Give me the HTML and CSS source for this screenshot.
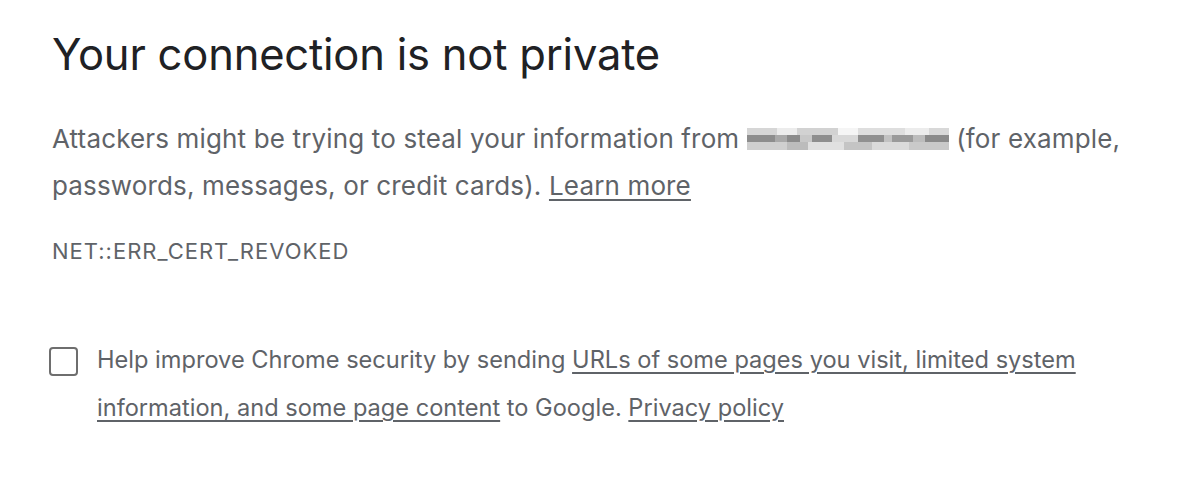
FILE: index.html
```html
<!DOCTYPE html>
<html lang="en">
<head>
    <meta charset="UTF-8">
    <title>Privacy error</title>
    <link rel="stylesheet" href="styles.css">
</head>
<body>
<div class="interstitial">
    <h1 class="main-title">Your connection is not private</h1>
    <p class="main-message">Attackers might be trying to steal your information from <span class="blur-host"><i class="px r1"></i><i class="px r2"></i><i class="px r3"></i></span> (for example,
        passwords, messages, or credit cards). <a href="#">Learn more</a></p>
    <div class="error-code">NET::ERR_CERT_REVOKED</div>
    <div class="extended-reporting">
        <span class="checkbox"></span>
        <p class="opt-in">Help improve Chrome security by sending <a href="#">URLs of some pages you visit, limited system information, and some page content</a> to Google. <a href="#">Privacy policy</a></p>
    </div>
</div>
</body>
</html>
```

FILE: styles.css
```css
html, body{
    margin: 0;
    padding: 0;
    background: #fff;
}
body{
    font-family: Inter, "Liberation Sans", Arial, sans-serif;
    color: #5f6368;
}
.interstitial{
    padding: 24px 0 0 52px;
    width: 1100px;
}
.main-title{
    margin: 0;
    font-size: 43.5px;
    font-weight: normal;
    letter-spacing: -0.2px;
    line-height: 60px;
    color: #202124;
}
.main-message{
    margin: 31px 0 0;
    font-size: 26px;
    letter-spacing: 0.15px;
    line-height: 47px;
}
a{
    color: #5f6368;
    text-decoration: underline;
    text-underline-offset: 4px;
    text-decoration-thickness: 1.5px;
}
.blur-host{
    display: inline-block;
    vertical-align: -2px;
    width: 202px;
    height: 22px;
}
.px{
    display: block;
    height: 7px;
}
.r1{
    background: linear-gradient(90deg, #d6d6d6 0 15%, #ececec 15% 25%, #d2d2d2 25% 45%, #f5f5f5 45% 55%, #dedede 55% 78%, #ececec 78% 90%, #d8d8d8 90%);
}
.r2{
    background: linear-gradient(90deg, #8d8d8d 0 14%, #a9a9a9 14% 20%, #8b8b8b 20% 26%, #c8c8c8 26% 32%, #8e8e8e 32% 42%, #d8d8d8 42% 55%, #909090 55% 68%, #c2c2c2 68% 72%, #9a9a9a 72% 82%, #bcbcbc 82% 88%, #8a8a8a 88%);
}
.r3{
    background: linear-gradient(90deg, #cfcfcf 0 20%, #bcbcbc 20% 30%, #e0e0e0 30% 48%, #c4c4c4 48% 62%, #dadada 62% 80%, #c9c9c9 80%);
    height: 8px;
}
.error-code{
    margin-top: 27px;
    font-size: 22px;
    letter-spacing: 1px;
    line-height: 30px;
    color: #5f6368;
}
.extended-reporting{
    display: flex;
    align-items: flex-start;
    margin-top: 70px;
}
.checkbox{
    flex: none;
    width: 25px;
    height: 25px;
    border: 2px solid #6e6e6e;
    border-radius: 4px;
    margin: 11px 19px 0 -3px;
}
.opt-in{
    margin: 0;
    font-size: 23.6px;
    line-height: 48px;
    width: 1000px;
}
```
